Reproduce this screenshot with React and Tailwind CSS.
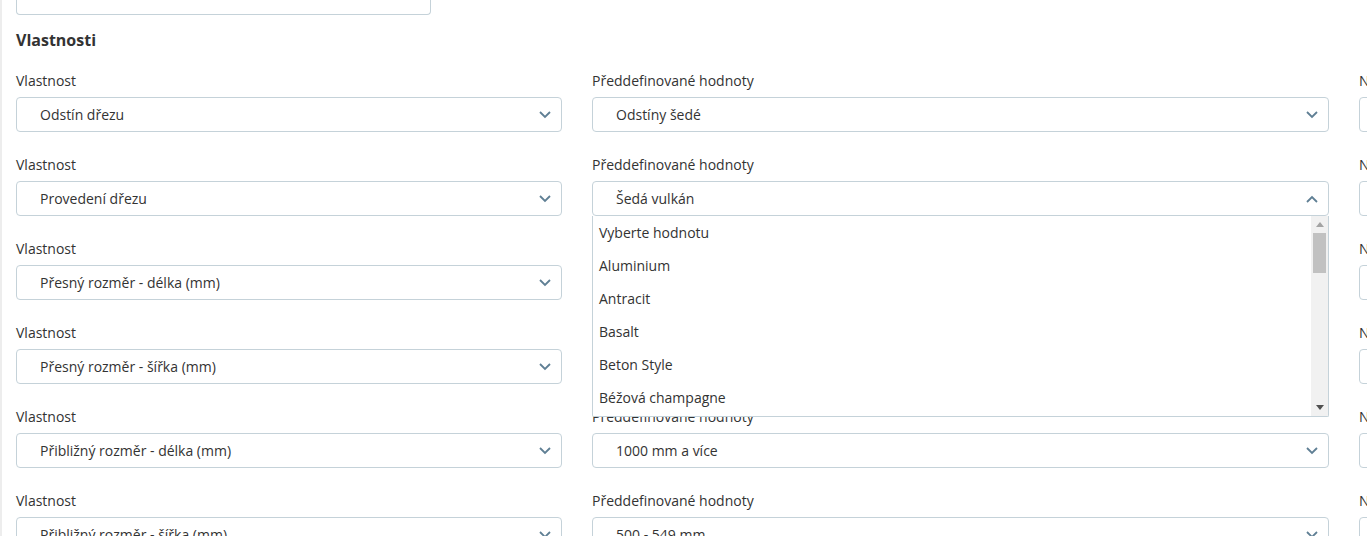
import React from 'react';

const font = { fontFamily: '"Open Sans", "Noto Sans", sans-serif' };

const Chevron = ({ up = false }) => (
  <svg width="12" height="8" viewBox="0 0 12 8" className="shrink-0">
    <polyline
      points={up ? '1,7 6,2 11,7' : '1,1 6,6 11,1'}
      fill="none"
      stroke="#5f7f94"
      strokeWidth="1.8"
    />
  </svg>
);

const Select = ({ value, open = false }) => (
  <div className="h-[35px] w-full rounded-[4px] border border-[#c5d2d9] bg-white flex items-center pl-[23px] pr-[10px] text-[14px] text-[#333]">
    <span className="flex-1 truncate">{value}</span>
    <Chevron up={open} />
  </div>
);

const Field = ({ label, value, open }) => (
  <div className="flex flex-col">
    <label className="text-[14px] leading-[20px] text-[#333] mb-[6px] whitespace-nowrap">{label}</label>
    <Select value={value} open={open} />
  </div>
);

const options = [
  'Vyberte hodnotu',
  'Aluminium',
  'Antracit',
  'Basalt',
  'Beton Style',
  'Béžová champagne',
];

const Dropdown = () => (
  <div className="absolute left-0 right-0 top-[61px] z-10 h-[201px] border border-t-0 border-[#c5d2d9] bg-white flex rounded-b-[2px]">
    <ul className="flex-1">
      {options.map((o) => (
        <li key={o} className="h-[33px] flex items-center pl-[6px] text-[14px] text-[#333]">
          {o}
        </li>
      ))}
    </ul>
    <div className="w-[17px] bg-[#f1f1f1] flex flex-col items-center">
      <div className="h-[17px] flex items-center justify-center">
        <svg width="8" height="5" viewBox="0 0 8 5">
          <polygon points="0,5 4,0 8,5" fill="#a3a3a3" />
        </svg>
      </div>
      <div className="w-[13px] h-[40px] bg-[#c1c1c1]" />
      <div className="flex-1" />
      <div className="h-[17px] flex items-center justify-center">
        <svg width="8" height="5" viewBox="0 0 8 5">
          <polygon points="0,0 8,0 4,5" fill="#505050" />
        </svg>
      </div>
    </div>
  </div>
);

const rows = [
  { prop: 'Odstín dřezu', val: 'Odstíny šedé' },
  { prop: 'Provedení dřezu', val: 'Šedá vulkán', open: true },
  { prop: 'Přesný rozměr - délka (mm)', val: '' },
  { prop: 'Přesný rozměr - šířka (mm)', val: '' },
  { prop: 'Přibližný rozměr - délka (mm)', val: '1000 mm a více' },
  { prop: 'Přibližný rozměr - šířka (mm)', val: '500 - 549 mm' },
];

export default function App() {
  return (
    <div
      style={font}
      className="w-[1367px] h-[536px] overflow-hidden bg-white border-l-2 border-[#ededed] relative"
    >
      <div className="pl-[14px] w-[1500px]">
        <div className="w-[415px] h-[15px] border border-t-0 border-[#c5d2d9] rounded-b-[4px]" />
        <h2 className="mt-[14px] text-[16px] leading-[22px] font-bold text-[#333]">Vlastnosti</h2>
        <div className="mt-[20px] grid grid-cols-[546px_737px_200px] gap-x-[30px] gap-y-[23px]">
          {rows.map((r) => (
            <React.Fragment key={r.prop}>
              <Field label="Vlastnost" value={r.prop} />
              <div className="relative">
                <Field label="Předdefinované hodnoty" value={r.val} open={r.open} />
                {r.open && <Dropdown />}
              </div>
              <Field label="Nová hodnota" value="" />
            </React.Fragment>
          ))}
        </div>
      </div>
    </div>
  );
}
